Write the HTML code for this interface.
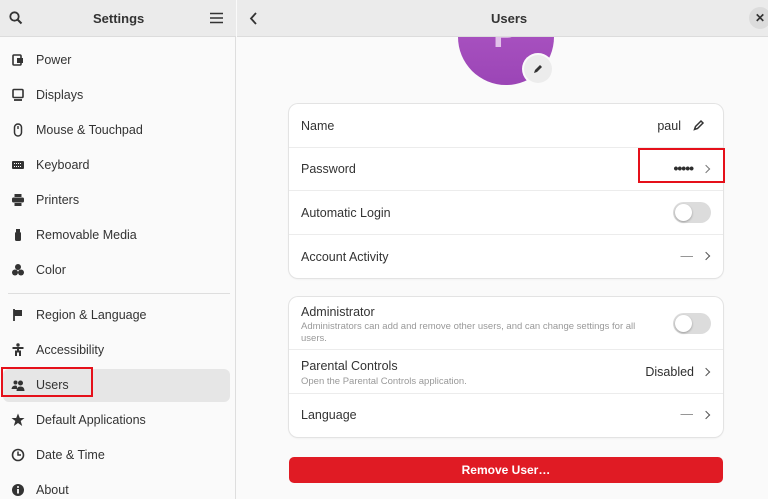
<!DOCTYPE html>
<html><head><style>
*{box-sizing:border-box;margin:0;padding:0}
body{width:768px;height:499px;overflow:hidden;font-family:"Liberation Sans",sans-serif;background:#fafafa;color:#2e2e2e;position:relative;font-size:12.5px}
.abs{position:absolute}
.hdr{top:0;height:37px;background:#ebebeb;border-bottom:1px solid #dcdcdc;z-index:5}
.side{left:0;top:0;width:236px;height:499px;border-right:1px solid #dedede;background:#fafafa}
.item{position:absolute;left:36px;font-size:12.5px;color:#333}
.ic{position:absolute;left:11px;width:14px;height:14px}
.card{position:absolute;left:289px;width:434px;background:#fff;border-radius:9px;box-shadow:0 0 0 1px #e3e3e3,0 1px 2px rgba(0,0,0,.08)}
.row{position:absolute;left:0;right:0;border-bottom:1px solid #ececec}
.row .l{position:absolute;left:12px;font-size:12.5px;color:#333}
.sub{font-size:9.5px;color:#999;position:absolute;left:12px}
.chev{position:absolute;right:14px;width:6px;height:6px;border-right:1.5px solid #555;border-top:1.5px solid #555;transform:rotate(45deg)}
.tog{position:absolute;right:12px;width:38px;height:21px;border-radius:11px;background:#dcdcdc}
.tog:after{content:"";position:absolute;left:2px;top:2px;width:17px;height:17px;border-radius:50%;background:#fff;box-shadow:0 1px 2px rgba(0,0,0,.3)}
.z{z-index:6}
</style></head><body>
<div class="abs side"></div>
<div class="abs hdr" style="left:0;width:236px"></div>
<div class="abs hdr" style="left:237px;width:531px"></div>
<svg class="abs z" style="left:9px;top:11px" width="14" height="14" viewBox="0 0 14 14"><circle cx="5.5" cy="5.5" r="4.2" fill="none" stroke="#333" stroke-width="1.8"/><path d="M8.5 8.5L12.5 12.5" stroke="#333" stroke-width="2"/></svg>
<div class="abs z" style="left:93px;top:11px;font-weight:bold;font-size:13px;color:#333">Settings</div>
<svg class="abs z" style="left:210px;top:12px" width="13" height="12"><path d="M0 1.5H13M0 6H13M0 10.5H13" stroke="#333" stroke-width="1.6"/></svg>
<svg class="abs z" style="left:249px;top:12px" width="10" height="13"><path d="M7 1L2 6.5L7 12" fill="none" stroke="#333" stroke-width="1.8"/></svg>
<div class="abs z" style="left:491px;top:11px;font-weight:bold;font-size:13px;color:#333">Users</div>
<div class="abs z" style="left:749px;top:7px;width:22px;height:22px;border-radius:50%;background:#dcdcdc;text-align:center;font-size:12px;line-height:22px;font-weight:bold;color:#333">✕</div>

<div class="abs" style="left:3px;top:369px;width:227px;height:33px;background:#e6e6e6;border-radius:6px"></div>
<div class="abs" style="left:8px;top:293px;width:222px;height:1px;background:#dedede"></div>
<div class="item" style="top:53px">Power</div>
<div class="item" style="top:88px">Displays</div>
<div class="item" style="top:123px">Mouse &amp; Touchpad</div>
<div class="item" style="top:158px">Keyboard</div>
<div class="item" style="top:193px">Printers</div>
<div class="item" style="top:228px">Removable Media</div>
<div class="item" style="top:263px">Color</div>
<div class="item" style="top:308px">Region &amp; Language</div>
<div class="item" style="top:343px">Accessibility</div>
<div class="item" style="top:378px">Users</div>
<div class="item" style="top:413px">Default Applications</div>
<div class="item" style="top:448px">Date &amp; Time</div>
<div class="item" style="top:483px">About</div>
<svg class="ic" style="top:53px" viewBox="0 0 14 14"><rect x="2" y="2" width="8" height="10" rx="1" fill="none" stroke="#333" stroke-width="1.6"/><rect x="6" y="5" width="6" height="5" fill="#333"/></svg>
<svg class="ic" style="top:88px" viewBox="0 0 14 14"><rect x="2" y="1.5" width="10" height="8" rx="1" fill="none" stroke="#333" stroke-width="1.6"/><path d="M3 12H11" stroke="#333" stroke-width="1.8"/></svg>
<svg class="ic" style="top:123px" viewBox="0 0 14 14"><rect x="3.5" y="1" width="7" height="12" rx="3.5" fill="none" stroke="#333" stroke-width="1.5"/><path d="M7 3V6" stroke="#333" stroke-width="1.4"/></svg>
<svg class="ic" style="top:158px" viewBox="0 0 14 14"><rect x="1" y="3" width="12" height="8" rx="1" fill="#333"/><path d="M3 5.5H11M3 8.5H11" stroke="#fff" stroke-width="1" stroke-dasharray="1 1"/></svg>
<svg class="ic" style="top:193px" viewBox="0 0 14 14"><rect x="3.5" y="1" width="7" height="3" fill="#333"/><rect x="1" y="4.5" width="12" height="5" rx="1.5" fill="#333"/><rect x="3.5" y="10" width="7" height="3" fill="#333"/></svg>
<svg class="ic" style="top:228px" viewBox="0 0 14 14"><rect x="4" y="4" width="6" height="9" rx="1.5" fill="#333"/><rect x="5" y="1" width="4" height="3" fill="#333"/></svg>
<svg class="ic" style="top:263px" viewBox="0 0 14 14"><circle cx="7" cy="4" r="3" fill="#333"/><circle cx="4" cy="9.5" r="3" fill="#333"/><circle cx="10" cy="9.5" r="3" fill="#333"/></svg>
<svg class="ic" style="top:308px" viewBox="0 0 14 14"><path d="M3 1V13" stroke="#333" stroke-width="1.8"/><path d="M3 2H11V8H3Z" fill="#333"/></svg>
<svg class="ic" style="top:343px" viewBox="0 0 14 14"><circle cx="7" cy="2" r="1.7" fill="#333"/><path d="M1.5 5H12.5M7 5V9M5 13V8.5H9V13" stroke="#333" stroke-width="2" fill="none"/></svg>
<svg class="ic" style="top:378px" viewBox="0 0 14 14"><circle cx="4.5" cy="4.5" r="2" fill="#333"/><circle cx="9.5" cy="5" r="2.5" fill="#333"/><path d="M0.5 11Q1 7.5 4.5 7.5Q6 7.5 6 9V11Z M5.5 13Q5.5 8.5 9.5 8.5Q13.5 8.5 13.5 13Z" fill="#333"/></svg>
<svg class="ic" style="top:413px" viewBox="0 0 14 14"><path d="M7 0.5L8.8 5H13.5L9.7 8L11.2 13L7 10L2.8 13L4.3 8L0.5 5H5.2Z" fill="#333"/></svg>
<svg class="ic" style="top:448px" viewBox="0 0 14 14"><circle cx="7" cy="7" r="5.5" fill="none" stroke="#333" stroke-width="1.6"/><path d="M7 3.5V7H10" stroke="#333" stroke-width="1.5" fill="none"/></svg>
<svg class="ic" style="top:483px" viewBox="0 0 14 14"><circle cx="7" cy="7" r="6" fill="#333"/><path d="M7 6V10.5" stroke="#fff" stroke-width="1.8"/><circle cx="7" cy="4" r="1" fill="#fff"/></svg>
<div class="abs" style="left:1px;top:367px;width:92px;height:30px;border:2px solid #e5101a"></div>

<div class="abs" style="left:458px;top:-11px;width:96px;height:96px;border-radius:50%;background:linear-gradient(#b25bc7,#9b45b6);overflow:hidden"><div style="position:absolute;left:35px;top:25px;color:#e2c2ea;font-size:38px;font-weight:bold">P</div></div>
<div class="abs" style="left:524px;top:55px;width:28px;height:28px;border-radius:50%;background:#ececec;box-shadow:0 0 0 2px #fafafa"></div>
<svg class="abs" style="left:532px;top:63px" width="12" height="12"><path d="M2 10L3 7L8 2L10 4L5 9Z" fill="#333"/></svg>

<div class="card" style="top:104px;height:174px">
<div class="row" style="top:0;height:44px"><span class="l" style="top:15px">Name</span><span style="position:absolute;right:42px;top:15px">paul</span><svg style="position:absolute;right:18px;top:15px" width="12" height="12"><path d="M1.5 10.5L2.5 7.5L8 2L10 4L4.5 9.5Z" fill="none" stroke="#333" stroke-width="1.5"/></svg></div>
<div class="row" style="top:44px;height:43px"><span class="l" style="top:14px">Password</span><span style="position:absolute;right:30px;top:12px;font-size:14px;letter-spacing:-1px;font-weight:bold">•••••</span><div class="chev" style="top:18px;border-color:#777"></div></div>
<div class="row" style="top:87px;height:44px"><span class="l" style="top:15px">Automatic Login</span><div class="tog" style="top:11px"></div></div>
<div class="row" style="top:131px;height:43px;border:none"><span class="l" style="top:15px">Account Activity</span><span style="position:absolute;right:30px;top:14px;color:#888">—</span><div class="chev" style="top:18px"></div></div>
</div>
<div class="abs" style="left:638px;top:148px;width:87px;height:35px;border:2px solid #e5101a"></div>

<div class="card" style="top:297px;height:140px">
<div class="row" style="top:0;height:53px"><span class="l" style="top:8px">Administrator</span><span class="sub" style="top:24px;width:360px;line-height:12px">Administrators can add and remove other users, and can change settings for all users.</span><div class="tog" style="top:16px"></div></div>
<div class="row" style="top:53px;height:44px"><span class="l" style="top:9px">Parental Controls</span><span class="sub" style="top:26px">Open the Parental Controls application.</span><span style="position:absolute;right:29px;top:15px">Disabled</span><div class="chev" style="top:19px"></div></div>
<div class="row" style="top:97px;height:43px;border:none"><span class="l" style="top:14px">Language</span><span style="position:absolute;right:30px;top:13px;color:#888">—</span><div class="chev" style="top:18px"></div></div>
</div>
<div class="abs" style="left:289px;top:457px;width:434px;height:26px;background:#e01b24;border-radius:5px;color:#fff;font-weight:bold;text-align:center;line-height:26px;font-size:12px">Remove User…</div>
</body></html>
